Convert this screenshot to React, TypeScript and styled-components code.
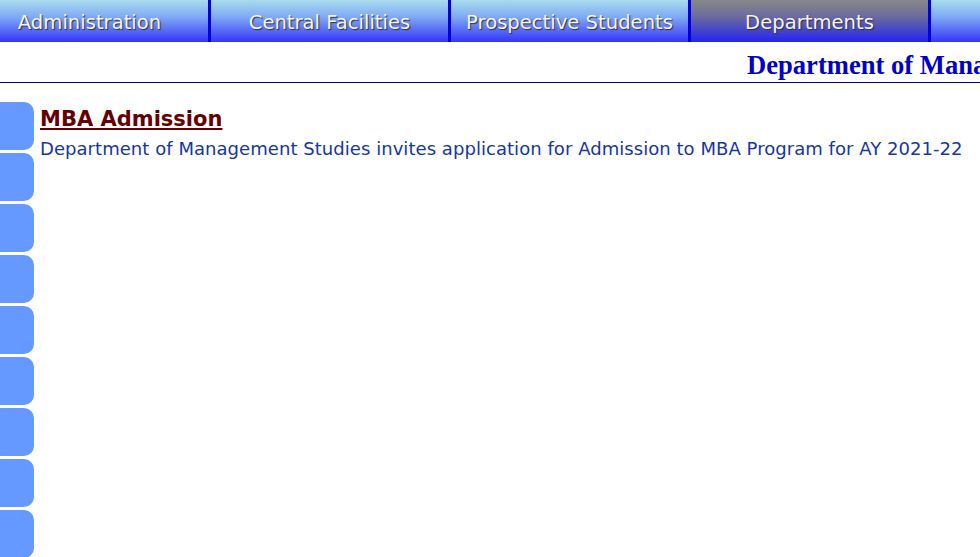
import React from "react";
import styled, { createGlobalStyle } from "styled-components";

const Global = createGlobalStyle`
  html, body { margin: 0; padding: 0; background: #ffffff; overflow: hidden; }
  body { font-family: "DejaVu Sans", Verdana, sans-serif; }
`;

const Page = styled.div`
  width: 980px;
  height: 557px;
  overflow: hidden;
`;

const NavBar = styled.nav`
  display: flex;
  height: 42px;
  margin-left: -29px;
`;

const NavTab = styled.a<{ $active?: boolean }>`
  flex: 0 0 240px;
  height: 42px;
  border-right: 3px solid #0000e0;
  display: flex;
  align-items: center;
  justify-content: center;
  padding-top: 2px;
  box-sizing: border-box;
  font-family: "DejaVu Sans", Verdana, sans-serif;
  font-size: 19.6px;
  color: #f4f4f4;
  text-shadow: 1px 1px 1px #303030;
  text-decoration: none;
  white-space: nowrap;
  background: ${(p) =>
    p.$active
      ? "linear-gradient(to bottom, #888888 0%, #6a6aa0 40%, #2424f2 100%)"
      : "linear-gradient(to bottom, #a9dbee 0%, #80aaf4 40%, #3434fb 100%)"};
`;

const Header = styled.header`
  height: 40px;
  border-bottom: 1px solid #000099;
  padding-left: 747px;
  display: flex;
  align-items: flex-end;
  overflow: hidden;
  white-space: nowrap;
`;

const Heading = styled.h1`
  margin: 0 0 1px 0;
  font-family: "Liberation Serif", "Times New Roman", serif;
  font-weight: bold;
  font-size: 26.6px;
  color: #0000cc;
  line-height: 32px;
`;

const Body = styled.div`
  display: flex;
  gap: 6px;
  padding-top: 19px;
`;

const SideMenu = styled.div`
  display: flex;
  flex-direction: column;
  gap: 3px;
`;

const SideTab = styled.div`
  width: 34px;
  height: 48px;
  background: #6699ff;
  border-radius: 0 10px 10px 0;
`;

const Content = styled.div`
  padding-top: 4px;
`;

const Title = styled.a`
  display: block;
  font-family: "DejaVu Sans", Verdana, sans-serif;
  font-weight: bold;
  font-size: 21px;
  line-height: 26px;
  color: #660000;
  text-decoration: underline;
`;

const Desc = styled.p`
  margin: 6px 0 0 0;
  font-family: "DejaVu Sans", Verdana, sans-serif;
  font-size: 18px;
  letter-spacing: 0.05px;
  line-height: 22px;
  color: #1436a8;
  white-space: nowrap;
`;

const tabs = ["Administration", "Central Facilities", "Prospective Students", "Departments", ""];

export default function App() {
  return (
    <Page>
      <Global />
      <NavBar>
        {tabs.map((t, i) => (
          <NavTab key={i} $active={t === "Departments"}>
            {t}
          </NavTab>
        ))}
      </NavBar>
      <Header>
        <Heading>Department of Management Studies</Heading>
      </Header>
      <Body>
        <SideMenu>
          {Array.from({ length: 9 }).map((_, i) => (
            <SideTab key={i} />
          ))}
        </SideMenu>
        <Content>
          <Title>MBA Admission</Title>
          <Desc>
            Department of Management Studies invites application for Admission to MBA Program for AY 2021-22
          </Desc>
        </Content>
      </Body>
    </Page>
  );
}
